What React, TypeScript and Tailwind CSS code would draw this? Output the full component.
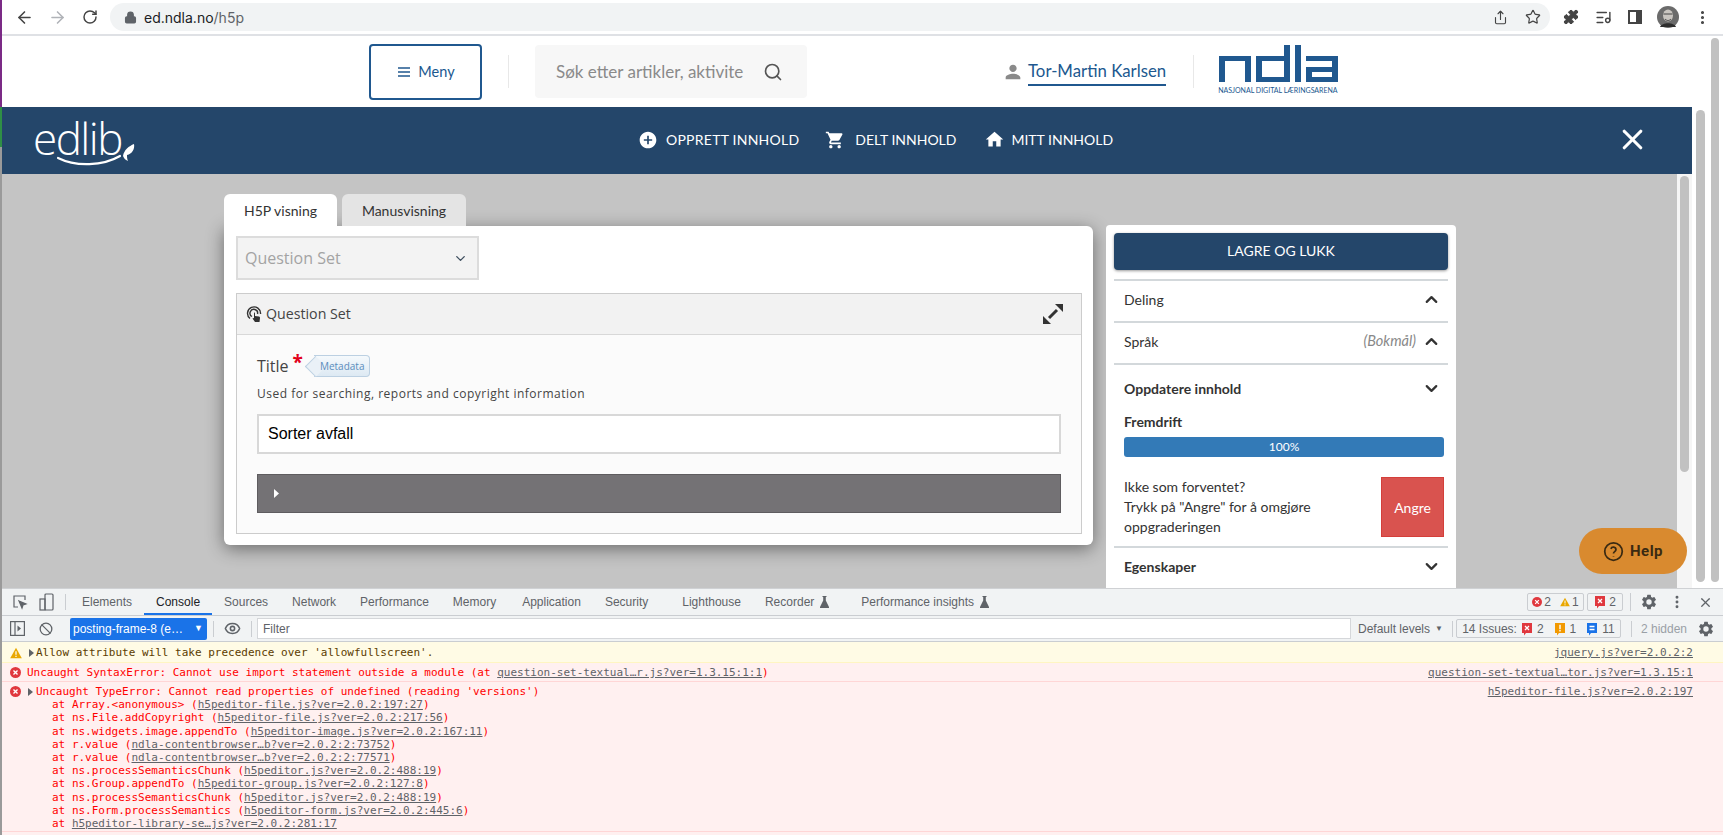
import React from "react";
import { ArrowLeft, ArrowRight, RotateCw, Lock, Share, Star, Search, X, ChevronDown, ChevronUp, Ban, Eye, MoreVertical, ListMusic, Puzzle } from "lucide-react";

const M = ({ d, size = 18, color = "currentColor" }: { d: string; size?: number; color?: string }) => (
  <svg width={size} height={size} viewBox="0 0 24 24" fill={color} className="shrink-0"><path d={d} /></svg>
);
const gear = "M19.14 12.94c.04-.3.06-.61.06-.94s-.02-.64-.07-.94l2.03-1.58a.49.49 0 0 0 .12-.61l-1.92-3.32a.49.49 0 0 0-.59-.22l-2.39.96a7 7 0 0 0-1.62-.94l-.36-2.54a.48.48 0 0 0-.48-.41h-3.84a.48.48 0 0 0-.47.41l-.36 2.54c-.59.24-1.13.57-1.62.94l-2.39-.96a.49.49 0 0 0-.59.22L2.74 8.87a.48.48 0 0 0 .12.61l2.03 1.58c-.05.3-.09.63-.09.94s.02.64.07.94l-2.03 1.58a.49.49 0 0 0-.12.61l1.92 3.32c.12.22.37.29.59.22l2.39-.96c.5.38 1.03.7 1.62.94l.36 2.54c.05.24.24.41.48.41h3.84c.24 0 .44-.17.47-.41l.36-2.54c.59-.24 1.13-.56 1.62-.94l2.39.96c.22.08.47 0 .59-.22l1.92-3.32a.48.48 0 0 0-.12-.61l-2.01-1.58zM12 15.6A3.6 3.6 0 1 1 12 8.4a3.6 3.6 0 0 1 0 7.2z";

const ErrIcon = ({ size = 12 }: { size?: number }) => (
  <svg width={size} height={size} viewBox="0 0 12 12" className="shrink-0">
    <circle cx="6" cy="6" r="6" fill="#e0383e" />
    <path d="M3.8 3.8l4.4 4.4M8.2 3.8L3.8 8.2" stroke="#fff" strokeWidth="1.5" />
  </svg>
);
const WarnIcon = ({ size = 12, color = "#e9a700" }: { size?: number; color?: string }) => (
  <svg width={size} height={size} viewBox="0 0 12 12" className="shrink-0">
    <path d="M6 .8L11.8 11.2H.2z" fill={color} />
    <path d="M6 4.2v3.6M6 8.8v1.2" stroke="#fff" strokeWidth="1.2" />
  </svg>
);
const Flag = ({ color, kind }: { color: string; kind: "x" | "!" | "=" }) => (
  <svg width="12" height="14" viewBox="0 0 12 14" className="shrink-0">
    <path d="M1 1h10v10H5l-2 2.5V11H1z" fill={color} />
    {kind === "x" && <path d="M4 4l4 4M8 4L4 8" stroke="#fff" strokeWidth="1.3" />}
    {kind === "!" && <path d="M6 2.8v4.4M6 8v1.4" stroke="#fff" strokeWidth="1.4" />}
    {kind === "=" && <path d="M3.5 4.5h5M3.5 7.5h5" stroke="#fff" strokeWidth="1.3" />}
  </svg>
);
const Flask = () => (
  <svg width="9" height="12" viewBox="0 0 9 12" className="shrink-0 ml-[6px]">
    <path d="M2.5 0h4v1h-.7v3.5L9 11v1H0v-1l3.2-6.5V1h-.7z" fill="#5f6368" />
  </svg>
);

const tabs: { t: string; flask?: boolean; extra?: string; active?: boolean }[] = [
  { t: "Elements" },
  { t: "Console", active: true },
  { t: "Sources" },
  { t: "Network" },
  { t: "Performance" },
  { t: "Memory", extra: "mr-[2px]" },
  { t: "Application" },
  { t: "Security", extra: "mr-[10px]" },
  { t: "Lighthouse" },
  { t: "Recorder", flask: true, extra: "mr-[8px]" },
  { t: "Performance insights", flask: true },
];

const Link = ({ children }: { children: React.ReactNode }) => (
  <span className="text-[#5f6368] underline underline-offset-1">{children}</span>
);

const stack: [string, string][] = [
  ["Array.<anonymous>", "h5peditor-file.js?ver=2.0.2:197:27"],
  ["ns.File.addCopyright", "h5peditor-file.js?ver=2.0.2:217:56"],
  ["ns.widgets.image.appendTo", "h5peditor-image.js?ver=2.0.2:167:11"],
  ["r.value", "ndla-contentbrowser…b?ver=2.0.2:2:73752"],
  ["r.value", "ndla-contentbrowser…b?ver=2.0.2:2:77571"],
  ["ns.processSemanticsChunk", "h5peditor.js?ver=2.0.2:488:19"],
  ["ns.Group.appendTo", "h5peditor-group.js?ver=2.0.2:127:8"],
  ["ns.processSemanticsChunk", "h5peditor.js?ver=2.0.2:488:19"],
  ["ns.Form.processSemantics", "h5peditor-form.js?ver=2.0.2:445:6"],
];

function ChromeBar() {
  return (
    <div className="h-[36px] shrink-0 bg-white border-b-2 border-[#dfe1e5] flex items-center text-[#5f6368]">
      <div className="w-[108px] flex items-center pl-[13px]">
        <ArrowLeft size={19} strokeWidth={2} className="text-[#444]" />
        <ArrowRight size={19} strokeWidth={2} className="ml-[14px] text-[#b0b3b8]" />
        <RotateCw size={16} strokeWidth={2.2} className="ml-[15px] text-[#444]" />
      </div>
      <div className="w-[1440px] h-[28px] rounded-full bg-[#f1f3f4] flex items-center pl-[14px]">
        <Lock size={13} strokeWidth={2.5} fill="#5f6368" className="text-[#5f6368]" />
        <span className="ml-[7px] text-[14px] text-[#202124] font-['Inter',sans-serif]">ed.ndla.no<span className="text-[#5f6368]">/h5p</span></span>
        <div className="ml-auto flex items-center gap-[17px] pr-[9px] text-[#444]">
          <Share size={15} strokeWidth={1.8} />
          <Star size={16} strokeWidth={1.8} />
        </div>
      </div>
      <div className="flex items-center pl-[13px] text-[#444]">
        <Puzzle size={16} fill="#444" strokeWidth={1.5} />
        <ListMusic size={17} strokeWidth={2} className="ml-[16px]" />
        <svg width="14" height="14" viewBox="0 0 14 14" className="ml-[16px]"><path fillRule="evenodd" d="M0 0h14v14H0zM2 2v10h6V2z" fill="#444" /></svg>
        <svg width="22" height="22" viewBox="0 0 22 22" className="ml-[15px]">
          <circle cx="11" cy="11" r="11" fill="#6b6b6b" />
          <ellipse cx="11" cy="9.5" rx="5" ry="6" fill="#c9c5c0" />
          <path d="M6.5 8h9M8 13c2 2 4 2 6 0" stroke="#444" strokeWidth="1" fill="none" />
          <path d="M3 21c2-5 14-5 16 0" fill="#2d2d2d" />
        </svg>
        <MoreVertical size={17} strokeWidth={2.4} className="ml-[15px]" />
      </div>
    </div>
  );
}

function SiteHeader() {
  return (
    <div className="h-[71px] shrink-0 bg-white flex items-center font-['Lato',sans-serif]">
      <button className="ml-[367px] w-[113px] h-[56px] rounded-[4px] border-2 border-[#20588f] flex items-center justify-center gap-[6px] text-[#20588f] text-[14.5px]">
        <svg width="16" height="12" viewBox="0 0 16 12" className="mt-[1px]"><path d="M2 2h12M2 6h12M2 10h12" stroke="#20588f" strokeWidth="1.3" /></svg>
        Meny
      </button>
      <div className="ml-[26px] w-px h-[33px] bg-[#e8e8e8]" />
      <div className="ml-[26px] w-[272px] h-[53px] bg-[#f7f7f7] rounded-[4px] flex items-center pl-[21px] text-[#8a8a8a] text-[17px]">
        <span className="w-[188px] whitespace-nowrap overflow-hidden">Søk etter artikler, aktivite</span>
        <Search size={20} strokeWidth={2} className="ml-[19px] text-[#555]" />
      </div>
      <div className="ml-[195px] text-[#8a8a8a] flex items-center"><M d="M12 12c2.21 0 4-1.79 4-4s-1.79-4-4-4-4 1.79-4 4 1.79 4 4 4zm0 2c-2.67 0-8 1.34-8 4v2h16v-2c0-2.66-5.33-4-8-4z" size={22} /></div>
      <span className="ml-[4px] text-[#20588f] text-[16.8px] border-b-2 border-[#20588f] pb-[1px] leading-[24px] mt-[1px] whitespace-nowrap">Tor-Martin Karlsen</span>
      <div className="ml-[27px] w-px h-[33px] bg-[#e8e8e8]" />
      <div className="ml-[24px] flex flex-col mt-[-3px]">
        <svg width="121" height="38" viewBox="0 0 121 38">
          <path fillRule="evenodd" fill="#20588f" d="M1 11H33V37H27V16H7V37H1ZM38 11H66V0H72V37H38ZM44 16V32H66V16ZM77 0H83V37H77ZM88 11H120V37H88V22H114V16H88ZM94 27V32H114V27Z" />
        </svg>
        <span className="text-[7px] leading-[9px] mt-[3px] text-[#20588f] whitespace-nowrap">NASJONAL DIGITAL LÆRINGSARENA</span>
      </div>
    </div>
  );
}

function Navy() {
  const item = "flex items-center text-white text-[14px] whitespace-nowrap";
  return (
    <div className="h-[67px] shrink-0 bg-[#24466a] flex items-center relative font-['Lato',sans-serif] pb-[2px]">
      <div className="ml-[31px] w-[106px] h-[50px] relative mt-[2px]">
        <span className="text-white text-[44px] font-['Open_Sans',sans-serif] font-light leading-[44px] tracking-[-1.5px] block">edlib</span>
        <svg width="106" height="50" viewBox="0 0 106 50" className="absolute left-0 top-0">
          <path d="M25 42c18 9 45 8 62-2" stroke="#fff" strokeWidth="2.2" fill="none" strokeLinecap="round" />
          <path d="M90 40c1-6 6-10 11-12 1 5-2 10-7 11 0 2 0 4 1 6-3-1-4-3-5-5z" fill="#fff" />
        </svg>
      </div>
      <div className={item + " ml-[499px]"}>
        <M d="M12 2C6.48 2 2 6.48 2 12s4.48 10 10 10 10-4.48 10-10S17.52 2 12 2zm5 11h-4v4h-2v-4H7v-2h4V7h2v4h4v2z" size={20} />
        <span className="ml-[8px] tracking-[0.25px]">OPPRETT INNHOLD</span>
      </div>
      <div className={item + " ml-[26px]"}>
        <M d="M7 18c-1.1 0-1.99.9-1.99 2S5.9 22 7 22s2-.9 2-2-.9-2-2-2zM1 2v2h2l3.6 7.59-1.35 2.45c-.16.28-.25.61-.25.96 0 1.1.9 2 2 2h12v-2H7.42c-.14 0-.25-.11-.25-.25l.03-.12.9-1.63h7.45c.75 0 1.41-.41 1.75-1.03l3.58-6.49c.08-.14.12-.31.12-.48 0-.55-.45-1-1-1H5.21l-.94-2H1zm16 16c-1.1 0-1.99.9-1.99 2s.89 2 1.99 2 2-.9 2-2-.9-2-2-2z" size={20} />
        <span className="ml-[10px]">DELT INNHOLD</span>
      </div>
      <div className={item + " ml-[28px]"}>
        <M d="M10 20v-6h4v6h5v-8h3L12 3 2 12h3v8z" size={21} />
        <span className="ml-[6px]">MITT INNHOLD</span>
      </div>
      <X size={33} strokeWidth={2.3} className="text-white ml-auto mr-[43px]" />
    </div>
  );
}

function MainCard() {
  return (
    <div className="w-[869px] shrink-0">
      <div className="flex h-[32px] items-stretch font-['Lato',sans-serif] text-[14px] text-[#333]">
        <div className="w-[113px] bg-white rounded-t-[6px] flex items-center justify-center">H5P visning</div>
        <div className="ml-[5px] w-[124px] bg-[#e4e4e4] rounded-t-[6px] flex items-center justify-center">Manusvisning</div>
      </div>
      <div className="bg-white h-[319px] rounded-b-[6px] rounded-tr-[6px] shadow-[0_4px_18px_rgba(0,0,0,0.45)] pl-[12px] pr-[11px] pt-[10px] font-['Open_Sans',sans-serif]">
        <div className="w-[243px] h-[44px] bg-[#f3f3f3] border-2 border-[#dcdcdc] flex items-center pl-[7px] pr-[9px] text-[16px] text-[#a3a3a3]">
          Question Set
          <ChevronDown size={15} strokeWidth={2.2} className="ml-auto text-[#3f4f5f]" />
        </div>
        <div className="mt-[13px] h-[241px] border border-[#ccc] bg-[#fbfbfb]">
          <div className="h-[41px] bg-[#f2f2f2] border-b border-[#d8d8d8] flex items-center pl-[9px] pr-[18px] text-[14.2px] text-[#444]">
            <svg width="17" height="17" viewBox="0 0 17 17" className="shrink-0">
              <g fill="none" stroke="#333" strokeWidth="1.4">
                <path d="M4 12.5A6.5 6.5 0 1 1 14.5 8" />
                <path d="M6 10.5A3.8 3.8 0 1 1 11.5 8" />
              </g>
              <path d="M8 6.5c.8 0 1 .5 1 1V10l4 .6c.8.2 1 .7 1 1.4l-.5 4H9L6.5 12.5l1-.6.5.4z" fill="#333" />
            </svg>
            <span className="ml-[3px]">Question Set</span>
            <svg width="20" height="20" viewBox="0 0 20 20" className="ml-auto" fill="#333">
              <path d="M12 0H20V8Z" />
              <path d="M0 12V20H8Z" />
              <path d="M14 6L6 14" stroke="#333" strokeWidth="3" />
            </svg>
          </div>
          <div className="px-[20px] pt-[19px]">
            <div className="flex items-center h-[24px]">
              <span className="text-[16px] text-[#444]">Title</span>
              <span className="ml-[4px] text-[#e2001a] text-[19px] leading-[19px] font-bold self-start mt-[-1px]">*</span>
              <span className="ml-[11px] relative h-[22px] w-[56px] border border-[#bcd0e2] border-l-0 rounded-r-[4px] bg-gradient-to-b from-[#f5f9fc] to-[#dde9f3] flex items-center pl-[6px] text-[10px] text-[#5b8dbc]">
                <span className="absolute left-[-6px] top-[3px] w-[15px] h-[15px] rotate-45 border-l border-b border-[#bcd0e2] bg-[#eaf1f7]" />
                <span className="relative">Metadata</span>
              </span>
            </div>
            <div className="mt-[8px] text-[12px] leading-[16px] tracking-[0.5px] text-[#444]">Used for searching, reports and copyright information</div>
            <div className="mt-[12px] h-[40px] bg-white border-2 border-[#d8d8d8] flex items-center pl-[9px] text-[16px] text-black font-['Liberation_Sans',sans-serif]">Sorter avfall</div>
            <div className="mt-[20px] h-[39px] bg-[#747275] border border-[#5e5c5f] flex items-center pl-[16px]">
              <svg width="5" height="9" viewBox="0 0 5 9"><path d="M0 0l5 4.5L0 9z" fill="#fff" /></svg>
            </div>
          </div>
        </div>
      </div>
    </div>
  );
}

function Sidebar() {
  const rule = "h-[2px] bg-[#d3d8db] shrink-0";
  return (
    <div className="ml-[13px] mt-[31px] w-[350px] h-[400px] shrink-0 bg-white rounded-[4px] px-[8px] pt-[8px] font-['Lato',sans-serif] text-[14px] text-[#333]">
      <button className="w-full h-[37px] pb-[2px] rounded-[4px] bg-[#24466a] text-white text-[14px] shadow-[0_1px_3px_rgba(0,0,0,0.4)]">LAGRE OG LUKK</button>
      <div className={rule + " mt-[9px]"} />
      <div className="h-[40px] flex items-center pl-[10px] pr-[7px] pb-[4px]">Deling<ChevronUp size={19} strokeWidth={2.8} className="ml-auto" /></div>
      <div className={rule} />
      <div className="h-[40px] flex items-center pl-[10px] pr-[7px] pb-[4px]">Språk<span className="ml-auto italic text-[14.5px] text-[#888]">(Bokmål)</span><ChevronUp size={19} strokeWidth={2.8} className="ml-[6px]" /></div>
      <div className={rule} />
      <div className="h-[51px] flex items-center pl-[10px] pr-[7px] pb-[5px] font-bold">Oppdatere innhold<ChevronDown size={19} strokeWidth={2.8} className="ml-auto" /></div>
      <div className="pl-[10px] pr-[4px] font-bold leading-[20px] mt-[-4px]">Fremdrift</div>
      <div className="ml-[10px] mr-[4px] mt-[5px] h-[20px] rounded-[3px] bg-[#337ab7] text-white text-[12px] flex items-center justify-center">100%</div>
      <div className="mt-[20px] ml-[10px] mr-[4px] flex h-[60px]">
        <div className="leading-[20px] text-[14px]">Ikke som forventet?<br />Trykk på "Angre" for å omgjøre<br />oppgraderingen</div>
        <div className="ml-auto w-[63px] bg-[#d9534f] border border-[#d43f3a] text-white flex items-center justify-center">Angre</div>
      </div>
      <div className={rule + " mt-[9px]"} />
      <div className="h-[40px] flex items-center pl-[10px] pr-[7px] pb-[4px] font-bold">Egenskaper<ChevronDown size={19} strokeWidth={2.8} className="ml-auto" /></div>
    </div>
  );
}

function DevTools() {
  const mono = "font-['DejaVu_Sans_Mono',monospace] text-[11px] leading-[13.2px]";
  return (
    <div className="flex-1 min-h-0 bg-[#fff0f0] font-['Liberation_Sans',sans-serif] border-t border-[#cfd1d4] overflow-hidden">
      <div className="h-[27px] bg-[#f1f3f4] border-b border-[#cacdd1] flex items-center text-[12px] text-[#5f6368]">
        <svg width="16" height="16" viewBox="0 0 16 16" className="ml-[10px]" fill="none" stroke="#5f6368" strokeWidth="1.2"><path d="M6 13H2V2h11v4" /><path d="M7 7l7 3-3 1-1 3z" fill="#5f6368" /></svg>
        <svg width="16" height="18" viewBox="0 0 16 18" className="ml-[11px]" fill="none" stroke="#5f6368" strokeWidth="1.2"><rect x="6" y="1" width="8" height="16" rx="1" /><rect x="1" y="6" width="5" height="11" /></svg>
        <div className="ml-[10px] w-px h-[16px] bg-[#cacdd1]" />
        <div className="flex items-stretch h-full ml-[4px]">
          {tabs.map((t) => (
            <div key={t.t} className={"px-[12px] pt-[1px] flex items-center whitespace-nowrap border-b-2 " + (t.active ? "border-[#1a73e8] text-[#202124]" : "border-transparent") + " " + (t.extra ?? "")}>
              {t.t}{t.flask && <Flask />}
            </div>
          ))}
        </div>
        <div className="ml-auto flex items-center">
          <div className="h-[18px] w-[57px] border border-[#cacdd1] rounded-[2px] flex items-center justify-center gap-[2px]"><ErrIcon size={10} /><span>2</span><span className="w-[5px]" /><WarnIcon size={10} /><span>1</span></div>
          <div className="ml-[3px] h-[18px] w-[36px] border border-[#cacdd1] rounded-[2px] flex items-center justify-center gap-[3px]"><Flag color="#e0383e" kind="x" /><span>2</span></div>
          <div className="ml-[7px] w-px h-[18px] bg-[#cacdd1]" />
          <div className="ml-[9px]"><M d={gear} size={18} /></div>
          <MoreVertical size={16} strokeWidth={2.4} className="ml-[11px]" />
          <X size={15} strokeWidth={2} className="ml-[13px] mr-[10px]" />
        </div>
      </div>
      <div className="h-[26px] bg-[#f1f3f4] border-b border-[#cacdd1] flex items-center text-[12px] text-[#5f6368]">
        <svg width="15" height="15" viewBox="0 0 15 15" className="ml-[8px]"><rect x=".6" y=".6" width="13.8" height="13.8" fill="none" stroke="#5f6368" strokeWidth="1.2" /><path d="M5 1v13" stroke="#5f6368" strokeWidth="1.2" /><path d="M7.5 4.5l3.5 3-3.5 3z" fill="#5f6368" /></svg>
        <Ban size={14} strokeWidth={2.2} className="ml-[14px]" />
        <div className="ml-[17px] w-[137px] h-[22px] bg-[#1a73e8] text-white flex items-center pl-[3px] rounded-[2px] whitespace-nowrap">posting-frame-8 (e…<span className="ml-auto mr-[4px] text-[9px]">▼</span></div>
        <div className="ml-[6px] w-px h-[16px] bg-[#cacdd1]" />
        <Eye size={17} strokeWidth={2.2} className="ml-[10px]" />
        <div className="ml-[10px] w-px h-[16px] bg-[#cacdd1]" />
        <div className="ml-[5px] w-[1094px] h-[21px] bg-white border border-[#d5d7da] flex items-center pl-[5px] text-[#5f6368]">Filter</div>
        <span className="ml-[7px] whitespace-nowrap">Default levels</span><span className="ml-[5px] text-[8px]">▼</span>
        <div className="ml-[9px] w-px h-[16px] bg-[#cacdd1]" />
        <div className="ml-[3px] w-[165px] h-[19px] border border-[#cacdd1] rounded-[2px] flex items-center justify-center gap-[4px] whitespace-nowrap">14 Issues:<Flag color="#e0383e" kind="x" />2<span className="w-[2px]" /><Flag color="#f29900" kind="!" />1<span className="w-[2px]" /><Flag color="#1a73e8" kind="=" />11</div>
        <div className="ml-[10px] w-px h-[16px] bg-[#cacdd1]" />
        <span className="ml-[9px] text-[#9aa0a6] whitespace-nowrap">2 hidden</span>
        <div className="ml-[10px]"><M d={gear} size={18} /></div>
      </div>
      <div className={"h-[21px] bg-[#fffbe5] border-b border-[#fff5c2] flex items-center pt-[2px] text-[#5c3c00] " + mono}>
        <span className="ml-[8px]"><WarnIcon size={12} /></span>
        <svg width="5" height="8" viewBox="0 0 5 8" className="ml-[7px]"><path d="M0 0l5 4-5 4z" fill="#5f6368" /></svg>
        <span className="ml-[2px]">Allow attribute will take precedence over 'allowfullscreen'.</span>
        <span className="ml-auto mr-[30px]"><Link>jquery.js?ver=2.0.2:2</Link></span>
      </div>
      <div className={"h-[19px] bg-[#fff0f0] border-b border-[#ffd6d6] flex items-center pt-[1px] text-[#ff0000] " + mono}>
        <span className="ml-[8px]"><ErrIcon size={11} /></span>
        <span className="ml-[6px]">Uncaught SyntaxError: Cannot use import statement outside a module (at <Link>question-set-textual…r.js?ver=1.3.15:1:1</Link>)</span>
        <span className="ml-auto mr-[30px]"><Link>question-set-textual…tor.js?ver=1.3.15:1</Link></span>
      </div>
      <div className={"h-[150px] bg-[#fff0f0] border-b border-[#ffd6d6] flex text-[#ff0000] pt-[3px] " + mono}>
        <span className="ml-[8px] mt-[1px]"><ErrIcon size={11} /></span>
        <svg width="5" height="8" viewBox="0 0 5 8" className="ml-[7px] mt-[3px] shrink-0"><path d="M0 0l5 4-5 4z" fill="#5f6368" /></svg>
        <div className="ml-[3px]">
          <div>Uncaught TypeError: Cannot read properties of undefined (reading 'versions')</div>
          {stack.map(([a, b], i) => (
            <div key={i} className="pl-[16px]">at {a} (<Link>{b}</Link>)</div>
          ))}
          <div className="pl-[16px]">at <Link>h5peditor-library-se…js?ver=2.0.2:281:17</Link></div>
        </div>
        <span className="ml-auto mr-[30px]"><Link>h5peditor-file.js?ver=2.0.2:197</Link></span>
      </div>
    </div>
  );
}

export default function App() {
  return (
    <div className="w-[1723px] h-[835px] flex overflow-hidden bg-white">
      <div className="w-[2px] shrink-0 flex flex-col">
        <div className="h-[107px] bg-[#7b2a86]" />
        <div className="h-[40px] bg-[#2f8f46]" />
        <div className="flex-1 bg-[#9a9a9a]" />
      </div>
      <div className="flex-1 min-w-0 flex flex-col">
        <ChromeBar />
        <div className="h-[552px] shrink-0 flex">
          <div className="w-[1690px] shrink-0 flex flex-col">
            <SiteHeader />
            <Navy />
            <div className="h-[414px] flex relative">
              <div className="w-[1675px] shrink-0 bg-[#c4c4c4] overflow-hidden flex items-start pl-[222px] pt-[20px]">
                <MainCard />
                <Sidebar />
              </div>
              <div className="flex-1 bg-[#f5f5f5] flex justify-center pt-[2px]">
                <div className="w-[9px] h-[296px] rounded-full bg-[#c1c1c1]" />
              </div>
              <div className="absolute left-[1577px] top-[354px] w-[108px] h-[46px] rounded-full bg-[#d98a2f] flex items-center justify-center gap-[6px] text-[#3a2a12] font-bold text-[15px] font-['Roboto',sans-serif] tracking-[0.5px]">
                <svg width="21" height="21" viewBox="0 0 24 24" fill="none" stroke="#3a2a12" strokeWidth="2"><circle cx="12" cy="12" r="10" /><path d="M9 9a3 3 0 0 1 5.8 1c0 2-2.8 2.4-2.8 4.2M12 17.2v.6" /></svg>
                Help
              </div>
            </div>
          </div>
          <div className="flex-1 bg-white flex justify-start gap-[6px] pl-[4px]">
            <div className="w-[9px] mt-[74px] h-[472px] rounded-full bg-[#c1c1c1]" />
            <div className="w-[8px] mt-[2px] h-[544px] rounded-full bg-[#c1c1c1]" />
          </div>
        </div>
        <DevTools />
      </div>
    </div>
  );
}
